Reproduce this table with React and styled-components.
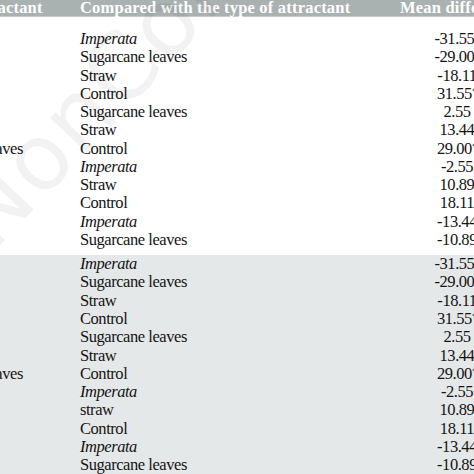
import React from "react";
import styled, { createGlobalStyle } from "styled-components";

const GlobalStyle = createGlobalStyle`
  html, body {
    margin: 0;
    padding: 0;
    background: #fff;
    overflow: hidden;
  }
  body {
    font-family: "Liberation Serif", "Times New Roman", serif;
    color: #141414;
  }
`;

const Page = styled.div`
  position: relative;
  width: 474px;
  height: 474px;
  overflow: hidden;
`;

const Table = styled.div`
  margin-left: -90px;
  width: 604px;
`;

const Row = styled.div`
  display: grid;
  grid-template-columns: 170px 320px 114px;
  height: 18.27px;
  line-height: 18.27px;
  font-size: 16.5px;
  letter-spacing: -0.45px;
`;

const HeaderRow = styled(Row)`
  height: 16px;
  line-height: 16px;
  background: #a9b1b1;
  border-bottom: 1px solid #c4caca;
  color: #fff;
  font-weight: bold;
  letter-spacing: 0.2px;
`;

const HeadCell = styled.div`
  padding-left: ${(p) => (p.$first ? "2px" : "0")};
  white-space: nowrap;
`;

const Group = styled.div`
  background: ${(p) => (p.$shaded ? "#e5e8e8" : "transparent")};
  margin-top: ${(p) => p.$top || 0}px;
  padding-bottom: ${(p) => p.$bottom || 0}px;
`;

const Label = styled.div`
  padding-left: 6px;
  white-space: nowrap;
`;

const Compared = styled.div`
  white-space: nowrap;
  font-style: ${(p) => (p.$italic ? "italic" : "normal")};
`;

const Value = styled.div`
  text-align: center;
  white-space: nowrap;
`;

const Star = styled.span`
  font-size: 11px;
  line-height: 0;
  vertical-align: 4px;
`;

const Watermark = styled.div`
  position: absolute;
  left: -30px;
  top: 178px;
  font-family: "DejaVu Sans", sans-serif;
  font-size: 92px;
  letter-spacing: 2px;
  color: rgba(0, 0, 0, 0.05);
  white-space: nowrap;
  transform: rotate(-47deg);
  transform-origin: 0 50%;
  pointer-events: none;
`;

const rows = [
  ["Control", "Imperata", "-31.55", true],
  ["", "Sugarcane leaves", "-29.00", true],
  ["", "Straw", "-18.11", false],
  ["Imperata", "Control", "31.55", true],
  ["", "Sugarcane leaves", "2.55", false],
  ["", "Straw", "13.44", false],
  ["Sugarcane leaves", "Control", "29.00", true],
  ["", "Imperata", "-2.55", false],
  ["", "Straw", "10.89", false],
  ["Straw", "Control", "18.11", false],
  ["", "Imperata", "-13.44", false],
  ["", "Sugarcane leaves", "-10.89", false],
];

const groupTwo = rows.map((r, i) => (i === 8 ? [r[0], "straw", r[2], r[3]] : r));

const DataRows = ({ data }) =>
  data.map(([label, cmp, val, sig], i) => (
    <Row key={i}>
      <Label>{label}</Label>
      <Compared $italic={cmp === "Imperata"}>{cmp}</Compared>
      <Value>
        {val}
        {sig && <Star>*</Star>}
      </Value>
    </Row>
  ));

export default function App() {
  return (
    <Page>
      <GlobalStyle />
      <Table>
        <HeaderRow>
          <HeadCell $first>Type of attractant</HeadCell>
          <HeadCell>Compared with the type of attractant</HeadCell>
          <HeadCell>Mean difference</HeadCell>
        </HeaderRow>
        <Group $top={13} $bottom={6}>
          <DataRows data={rows} />
        </Group>
        <Group $shaded>
          <DataRows data={groupTwo} />
        </Group>
      </Table>
      <Watermark>NonCommercial</Watermark>
    </Page>
  );
}
